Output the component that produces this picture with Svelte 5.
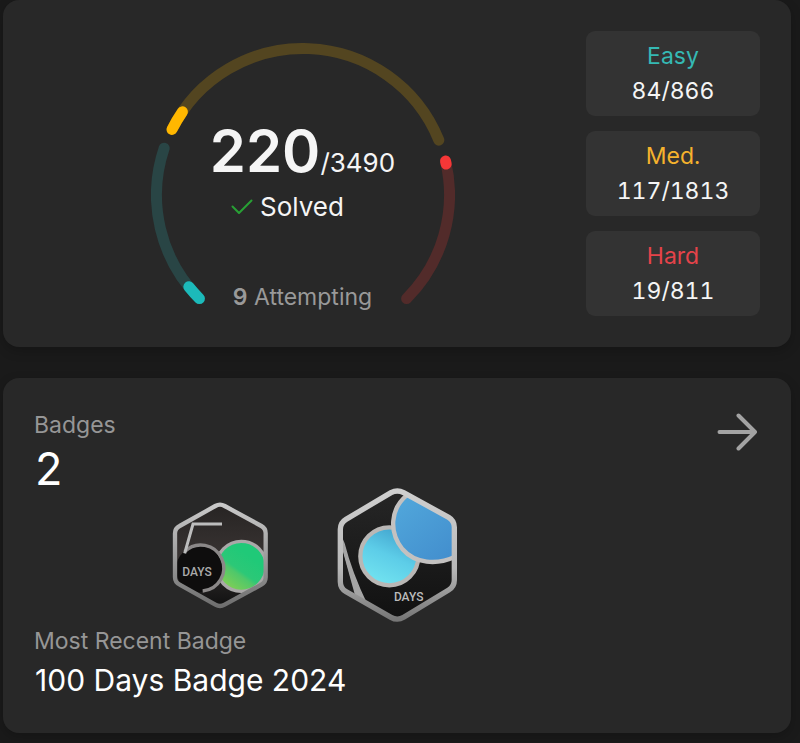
<script>
  const CX = 152;
  const CY = 152;
  const R = 146.5;

  const solved = 220;
  const total = 3490;
  const attempting = 9;

  // Angles are in degrees, clockwise from twelve o'clock.
  const levels = [
    { id: 'easy', label: 'Easy', done: 84, all: 866, from: 225, to: 288.6, mark: 231.2 },
    { id: 'medium', label: 'Med.', done: 117, all: 1813, from: 296.6, to: 428, mark: 304.6 },
    { id: 'hard', label: 'Hard', done: 19, all: 811, from: 436.6, to: 495, mark: 437.8 }
  ];

  function point(deg) {
    const a = (deg * Math.PI) / 180;
    return `${(CX + R * Math.sin(a)).toFixed(2)} ${(CY - R * Math.cos(a)).toFixed(2)}`;
  }

  function arc(from, to) {
    return `M${point(from)}A${R} ${R} 0 ${to - from > 180 ? 1 : 0} 1 ${point(to)}`;
  }
</script>

<main>
  <section class="card progress" aria-label="Solved problems">
    <div class="dial">
      <svg viewBox="0 0 304 262" aria-hidden="true">
        {#each levels as level}
          <g class={level.id}>
            <path class="track" d={arc(level.from, level.to)} />
            <path class="fill" d={arc(level.from, level.mark)} />
          </g>
        {/each}
      </svg>
      <div class="figures">
        <div class="count"><strong>{solved}</strong><span>/{total}</span></div>
        <div class="solved">
          <svg viewBox="0 0 22 16" aria-hidden="true"><path d="M1.5 7.5 8 14 20.5 1.5" /></svg>
          <span>Solved</span>
        </div>
        <div class="attempting"><b>{attempting}</b> Attempting</div>
      </div>
    </div>

    <div class="levels">
      {#each levels as level}
        <div class="level {level.id}">
          <span class="name">{level.label}</span>
          <span>{level.done}/{level.all}</span>
        </div>
      {/each}
    </div>
  </section>

  <section class="card badges">
    <header>
      <div>
        <h2>Badges</h2>
        <p class="number">2</p>
      </div>
      <a href="#badges" aria-label="All badges">
        <svg viewBox="0 0 40 38" aria-hidden="true"><path d="M2.5 19H38M21.5 2.5 38 19 21.5 35.5" /></svg>
      </a>
    </header>

    <div class="shelf">
      <svg class="small" viewBox="36 36 288 321" role="img" aria-label="50 days badge">
        <defs>
          <linearGradient id="rim50" x1="0" y1="0" x2="0" y2="1">
            <stop offset="0" stop-color="#c9c9c9" />
            <stop offset=".45" stop-color="#a3a3a3" />
            <stop offset="1" stop-color="#6f6f6f" />
          </linearGradient>
          <linearGradient id="face50" x1="0" y1="0" x2="0" y2="1">
            <stop offset="0" stop-color="#272423" />
            <stop offset=".5" stop-color="#383332" />
            <stop offset="1" stop-color="#111" />
          </linearGradient>
          <linearGradient id="green" x1=".1" y1=".95" x2=".6" y2=".25">
            <stop offset="0" stop-color="#8fd04f" />
            <stop offset=".5" stop-color="#4fc86a" />
            <stop offset=".6" stop-color="#2cc877" />
            <stop offset="1" stop-color="#20c978" />
          </linearGradient>
          <clipPath id="hex50"><path d="M166 48Q180 40 194 48L304 108Q317 115 317 130V262Q317 277 304 284L194 344Q180 352 166 344L59 284Q45 277 45 262V130Q45 115 59 108Z" /></clipPath>
        </defs>
        <path d="M166 48Q180 40 194 48L304 108Q317 115 317 130V262Q317 277 304 284L194 344Q180 352 166 344L59 284Q45 277 45 262V130Q45 115 59 108Z" fill="url(#face50)" />
        <g clip-path="url(#hex50)">
          <circle cx="244" cy="229" r="75" fill="url(#green)" stroke="#aaa8a8" stroke-width="10" />
          <circle cx="118" cy="237" r="70" fill="#0e0d0d" />
          <path d="M74 185A69 69 0 1 1 128 303" fill="none" stroke="#8b8888" stroke-width="10" />
          <path d="M186 102H99L74 190" fill="none" stroke="#bdbdbd" stroke-width="9" />
        </g>
        <path d="M166 48Q180 40 194 48L304 108Q317 115 317 130V262Q317 277 304 284L194 344Q180 352 166 344L59 284Q45 277 45 262V130Q45 115 59 108Z" fill="none" stroke="url(#rim50)" stroke-width="13" />
        <text x="111" y="259" font-size="36" fill="#aaa">DAYS</text>
      </svg>

      <svg class="large" viewBox="36 24 360 402" role="img" aria-label="100 days badge">
        <defs>
          <linearGradient id="rim100" x1="0" y1="0" x2="0" y2="1">
            <stop offset="0" stop-color="#cfcfcf" />
            <stop offset=".6" stop-color="#b9b9b9" />
            <stop offset="1" stop-color="#777" />
          </linearGradient>
          <linearGradient id="face100" x1="0" y1="0" x2="0" y2="1">
            <stop offset="0" stop-color="#262626" />
            <stop offset="1" stop-color="#111" />
          </linearGradient>
          <linearGradient id="cyan" x1=".75" y1="0" x2=".3" y2="1">
            <stop offset="0" stop-color="#3f9fcb" />
            <stop offset=".5" stop-color="#5dcde8" />
            <stop offset="1" stop-color="#73e4f0" />
          </linearGradient>
          <linearGradient id="blue" x1="0" y1="0" x2=".8" y2="1">
            <stop offset="0" stop-color="#52a9dc" />
            <stop offset="1" stop-color="#438fce" />
          </linearGradient>
          <clipPath id="hex100"><path d="M198 38Q217 28 236 38L371 112Q388 122 388 142V300Q388 320 371 330L236 412Q217 423 198 412L63 335Q46 325 46 305V148Q46 128 63 118Z" /></clipPath>
        </defs>
        <path d="M198 38Q217 28 236 38L371 112Q388 122 388 142V300Q388 320 371 330L236 412Q217 423 198 412L63 335Q46 325 46 305V148Q46 128 63 118Z" fill="url(#face100)" />
        <g clip-path="url(#hex100)">
          <path d="M46 160 59 190Q82 280 127 372L90 355 46 190Z" fill="#a5a5a5" />
          <path d="M50 202 90 346 50 322Z" fill="#1d1d1d" />
          <circle cx="193" cy="229" r="87" fill="url(#cyan)" stroke="#b9b7b5" stroke-width="13" />
          <path d="M245 46C195 88 192 157 232 207C270 251 335 257 394 229V116L245 42Z" fill="url(#blue)" stroke="#c3c1c0" stroke-width="13" />
        </g>
        <path d="M198 38Q217 28 236 38L371 112Q388 122 388 142V300Q388 320 371 330L236 412Q217 423 198 412L63 335Q46 325 46 305V148Q46 128 63 118Z" fill="none" stroke="url(#rim100)" stroke-width="16" />
        <text x="251" y="364" font-size="36" fill="#bbb">DAYS</text>
      </svg>
    </div>

    <h3>Most Recent Badge</h3>
    <p class="recent">100 Days Badge 2024</p>
  </section>
</main>

<style>
  :global(body) {
    margin: 0;
    background: #1a1a1a;
  }

  main {
    display: flex;
    flex-direction: column;
    gap: 31px;
    padding: 0 9px 10px 3px;
    color: #f5f5f5;
    font-family: Inter, "Liberation Sans", sans-serif;
  }

  h2,
  h3,
  p {
    margin: 0;
    font-weight: 400;
  }

  .card {
    padding: 31px;
    border-radius: 16px;
    background: #282828;
    box-shadow: 0 4px 12px rgb(0 0 0 / 20%);
  }

  .progress {
    display: flex;
    gap: 15px;
  }

  .easy {
    --tone: #1cbaba;
    --dim: #294545;
  }

  .medium {
    --tone: #ffb700;
    --dim: #534520;
  }

  .hard {
    --tone: #f63737;
    --dim: #522b2a;
  }

  .dial {
    display: grid;
    flex: 1;
    place-content: start center;
    padding-top: 12px;
  }

  .dial > * {
    grid-area: 1 / 1;
  }

  .dial > svg {
    width: 304px;
    height: 262px;
    fill: none;
    stroke-linecap: round;
    stroke-width: 11px;
  }

  .track {
    stroke: var(--dim);
  }

  .fill {
    stroke: var(--tone);
  }

  .figures {
    display: flex;
    flex-direction: column;
    align-items: center;
    padding-top: 81px;
  }

  .count {
    font-size: 26px;
    line-height: 54px;
  }

  .count strong {
    font-size: 58px;
    font-weight: 600;
  }

  .solved {
    display: flex;
    align-items: center;
    gap: 7px;
    padding-right: 30px;
    font-size: 26px;
    line-height: 34px;
  }

  .solved svg {
    width: 22px;
    height: 16px;
    fill: none;
    stroke: #28a035;
    stroke-width: 2px;
    stroke-linecap: round;
    stroke-linejoin: round;
  }

  .attempting {
    margin-top: 60px;
    color: #999;
    font-size: 23px;
    line-height: 26px;
  }

  .attempting b {
    font-weight: 600;
  }

  .levels {
    display: flex;
    flex-direction: column;
    gap: 15px;
    width: 174px;
    font-variant-numeric: tabular-nums;
  }

  .level {
    display: flex;
    flex-direction: column;
    align-items: center;
    gap: 3px;
    padding: 9px 0;
    border-radius: 9px;
    background: #333;
    font-size: 23px;
    line-height: 32px;
  }

  .name {
    color: var(--tone);
  }

  .level.easy .name {
    color: #35b9b4;
  }

  .level.medium .name {
    color: #f5b22d;
  }

  .level.hard .name {
    color: #e5434a;
  }

  .badges {
    padding: 32px 31px 29px;
  }

  header {
    display: flex;
    justify-content: space-between;
  }

  h2,
  h3 {
    color: #969696;
    font-size: 23px;
    line-height: 30px;
  }

  .number {
    font-size: 45px;
    line-height: 58px;
  }

  header a {
    padding: 3px;
    color: #a3a3a3;
  }

  header a svg {
    display: block;
    width: 40px;
    height: 38px;
    fill: none;
    stroke: currentColor;
    stroke-width: 4px;
    stroke-linecap: round;
    stroke-linejoin: round;
  }

  .shelf {
    display: grid;
    grid-template-columns: repeat(3, 177px);
    justify-content: center;
    place-items: center;
    margin-top: -10px;
  }

  .shelf text {
    font-family: Roboto, "Liberation Sans", sans-serif;
    font-weight: 500;
    text-anchor: middle;
  }

  .small {
    width: 96px;
    height: 107px;
  }

  .large {
    width: 120px;
    height: 134px;
  }

  h3 {
    margin-top: 4px;
  }

  .number,
  .recent {
    padding-left: 1px;
    color: #fff;
  }

  .recent {
    font-size: 30px;
    line-height: 48px;
  }
</style>
